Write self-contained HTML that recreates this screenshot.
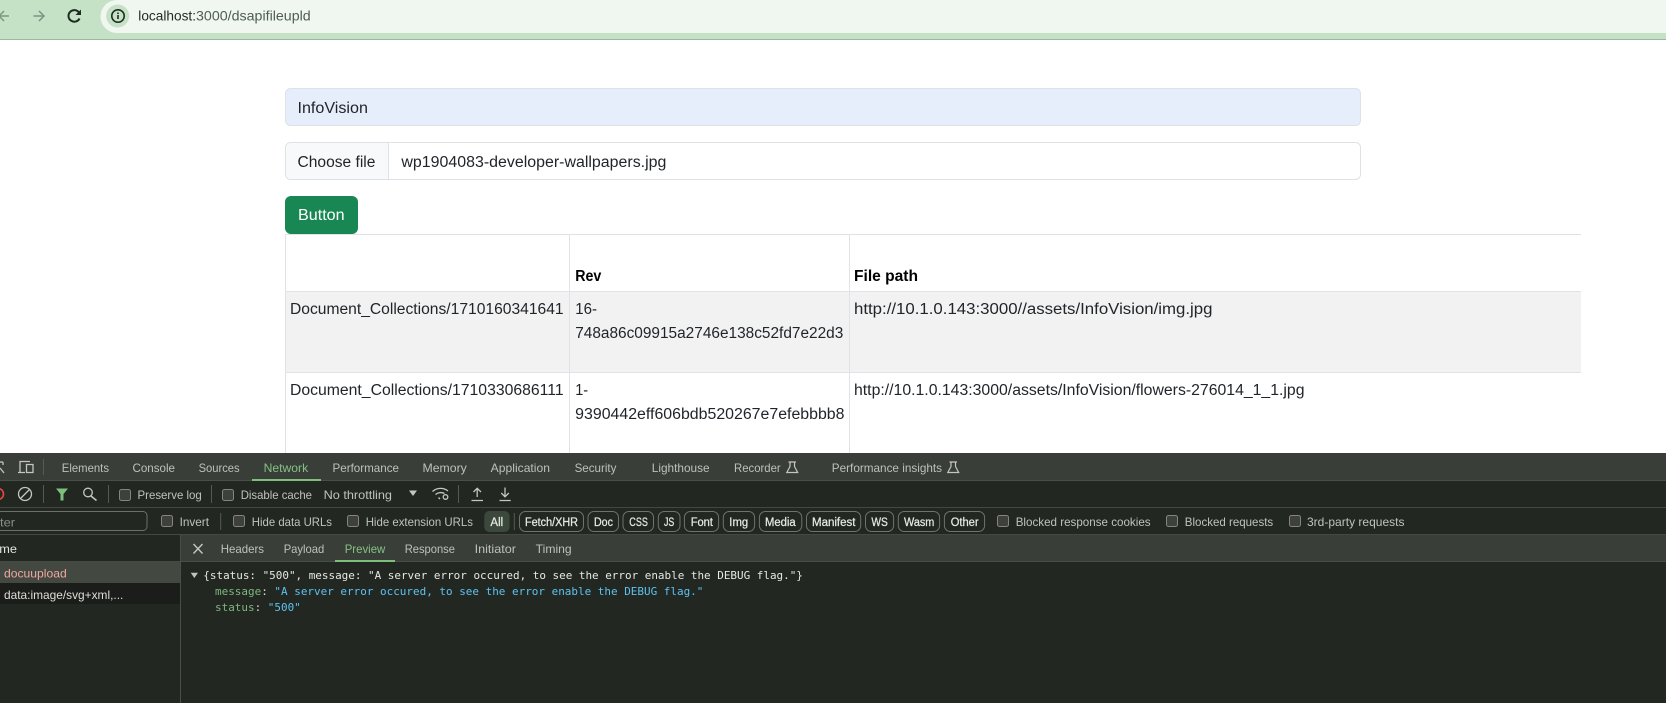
<!DOCTYPE html>
<html><head><meta charset="utf-8"><style>
html,body{margin:0;padding:0;width:1666px;height:703px;overflow:hidden;background:#fff}
svg{display:block}
text{font-family:"Liberation Sans",sans-serif;white-space:pre}
.p{font-size:15.5px;fill:#212529}
.d{font-size:12px;fill:#bfc3bb}
.t{font-size:12px;fill:#bdc1b9}
.c{font-size:11.5px;fill:#e6e9e2;stroke:#e6e9e2;stroke-width:.25}
.m{font-family:"DejaVu Sans Mono",monospace;font-size:10.8px}
.ck{fill:#3e403e;stroke:#82867f;stroke-width:1}
.chip{fill:none;stroke:#6f736c;stroke-width:1}
.i{fill:none;stroke:#c3c7bf;stroke-width:1.3}
.div{stroke:#565a54;stroke-width:1}
</style></head><body>
<svg width="1666" height="703" viewBox="0 0 1666 703" xmlns="http://www.w3.org/2000/svg">
<!-- browser bar -->
<rect width="1666" height="39" fill="#c5e1c6"/>
<rect y="39" width="1666" height="1" fill="#9db7a0"/>
<path d="M117 0H1666V33H117A16.500 16.500 0 0 1 117 0Z" fill="#f0f7f0"/>
<circle cx="117.700" cy="16" r="11.500" fill="#c5e1c6"/>
<circle cx="118" cy="16" r="6.200" fill="none" stroke="#1f2a22" stroke-width="1.600"/>
<path d="M118 15v4M118 12.500v1.500" stroke="#1f2a22" stroke-width="1.600" fill="none"/>
<path d="M9 16H0M4 11l-5 5 5 5" fill="none" stroke="#7f9482" stroke-width="1.500"/>
<path d="M33.500 16H44M39 11l5 5-5 5" fill="none" stroke="#7f9482" stroke-width="1.500"/>
<path d="M79.500 18.500A5.800 5.800 0 1 1 79 12.500" fill="none" stroke="#1f2a22" stroke-width="2"/>
<path d="M81 9.500V15H75.500Z" fill="#1f2a22"/>
<text x="138.300" y="20.500" font-size="14" fill="#1f2a22" textLength="57.700" lengthAdjust="spacingAndGlyphs">localhost:</text>
<text x="196" y="20.500" font-size="14" fill="#4f5c55" textLength="114.700" lengthAdjust="spacingAndGlyphs">3000/dsapifileupld</text>

<!-- page -->
<rect x="285.500" y="88.500" width="1075" height="37" rx="5" fill="#e7eefb" stroke="#dee2e6"/>
<text class="p" x="297.500" y="113" textLength="70.400" lengthAdjust="spacingAndGlyphs">InfoVision</text>
<rect x="285.500" y="142.500" width="1075" height="37" rx="5" fill="#fff" stroke="#dee2e6"/>
<path d="M388.500 143H290.500A5 5 0 0 0 286 148V174.500A5 5 0 0 0 290.500 179H388.500Z" fill="#f8f9fa"/>
<path d="M388.500 142.500V179.500" stroke="#dee2e6"/>
<text class="p" x="297.500" y="167" textLength="77.900" lengthAdjust="spacingAndGlyphs">Choose file</text>
<text class="p" x="401.400" y="167" textLength="265" lengthAdjust="spacingAndGlyphs">wp1904083-developer-wallpapers.jpg</text>
<rect x="285" y="196" width="73" height="38" rx="6" fill="#198754"/>
<text x="298" y="220" font-size="15.500" fill="#fff" textLength="46.600" lengthAdjust="spacingAndGlyphs">Button</text>

<rect x="285" y="291" width="1296" height="81" fill="#f2f2f2"/>
<path d="M285 234.500H1581M285 291.500H1581M285 372.500H1581M285.500 234V453M569.500 234V453M849.500 234V453" stroke="#dfe2e7" fill="none"/>
<text x="575.200" y="281" font-size="15.500" font-weight="bold" fill="#000" textLength="26.100" lengthAdjust="spacingAndGlyphs">Rev</text>
<text x="854" y="281" font-size="15.500" font-weight="bold" fill="#000" textLength="64" lengthAdjust="spacingAndGlyphs">File path</text>
<text class="p" x="290" y="314" textLength="273.600" lengthAdjust="spacingAndGlyphs">Document_Collections/1710160341641</text>
<text class="p" x="575.200" y="314" textLength="21.800" lengthAdjust="spacingAndGlyphs">16-</text>
<text class="p" x="575.200" y="338" textLength="268.100" lengthAdjust="spacingAndGlyphs">748a86c09915a2746e138c52fd7e22d3</text>
<text class="p" x="854" y="314" textLength="358.500" lengthAdjust="spacingAndGlyphs">http://10.1.0.143:3000//assets/InfoVision/img.jpg</text>
<text class="p" x="290" y="395" textLength="273.600" lengthAdjust="spacingAndGlyphs">Document_Collections/1710330686111</text>
<text class="p" x="575.200" y="395" textLength="12.900" lengthAdjust="spacingAndGlyphs">1-</text>
<text class="p" x="575.200" y="419" textLength="269.300" lengthAdjust="spacingAndGlyphs">9390442eff606bdb520267e7efebbbb8</text>
<text class="p" x="854" y="395" textLength="450.500" lengthAdjust="spacingAndGlyphs">http://10.1.0.143:3000/assets/InfoVision/flowers-276014_1_1.jpg</text>

<!-- devtools -->
<rect y="453" width="1666" height="250" fill="#232722"/>
<rect y="453" width="1666" height="27" fill="#3a3e38"/>
<rect y="480" width="1666" height="1" fill="#4a4e48"/>
<rect y="507" width="1666" height="1" fill="#444842"/>
<rect y="534" width="1666" height="1" fill="#444842"/>
<rect x="181" y="535" width="1485" height="26" fill="#3a3e38"/>
<rect x="181" y="561" width="1485" height="1" fill="#4a4e48"/>
<rect x="0" y="561" width="180" height="22" fill="#434841"/>
<rect x="0" y="583" width="180" height="21" fill="#1a1d19"/>
<rect x="180" y="534" width="1" height="169" fill="#4a4e48"/>

<!-- top tabs -->
<path class="i" d="M-4 462H3M3 462V465M0 468l4 5" />
<path class="i" d="M30 461.500H20V472M18 472.500H25M26.500 464.500H33V472.500H26.500Z"/>
<path class="div" d="M43.500 459V475"/>
<g class="d">
<text class="t" x="61.800" y="472" textLength="47.200" lengthAdjust="spacingAndGlyphs">Elements</text>
<text class="t" x="132.500" y="472" textLength="42.500" lengthAdjust="spacingAndGlyphs">Console</text>
<text class="t" x="198.600" y="472" textLength="41" lengthAdjust="spacingAndGlyphs">Sources</text>
<text class="t" x="263.600" y="472" textLength="44.600" lengthAdjust="spacingAndGlyphs" style="fill:#83c283">Network</text>
<text class="t" x="332.500" y="472" textLength="66.500" lengthAdjust="spacingAndGlyphs">Performance</text>
<text class="t" x="422.500" y="472" textLength="44.300" lengthAdjust="spacingAndGlyphs">Memory</text>
<text class="t" x="490.700" y="472" textLength="59.300" lengthAdjust="spacingAndGlyphs">Application</text>
<text class="t" x="574.600" y="472" textLength="41.800" lengthAdjust="spacingAndGlyphs">Security</text>
<text class="t" x="651.800" y="472" textLength="57.800" lengthAdjust="spacingAndGlyphs">Lighthouse</text>
<text class="t" x="734" y="472" textLength="46.700" lengthAdjust="spacingAndGlyphs">Recorder</text>
<text class="t" x="831.800" y="472" textLength="110.200" lengthAdjust="spacingAndGlyphs">Performance insights</text>
</g>
<rect x="252" y="479" width="69" height="2" fill="#7ebf7c"/>
<path class="i" d="M788.500 462H796M790 462V466.500L786.800 472.500H797.700L794.500 466.500V462" style="stroke-width:1.200"/>
<path class="i" d="M949.500 462H957M951 462V466.500L947.800 472.500H958.700L955.500 466.500V462" style="stroke-width:1.200"/>

<!-- toolbar -->
<circle cx="-2" cy="494" r="5.500" fill="none" stroke="#e5483c" stroke-width="1.600"/>
<circle cx="25" cy="494" r="6.500" class="i"/>
<path class="i" d="M20.500 498.500L29.500 489.500"/>
<path class="div" d="M43.500 485V503M108.500 485V503M211.500 485V503M458.500 485V503"/>
<path d="M56 488.500H68L63.500 494V500.500H60.500V494Z" fill="#7ebf7c"/>
<circle cx="88" cy="492.500" r="4.300" class="i"/>
<path class="i" d="M91 496L96.500 500.500" style="stroke-width:1.600"/>
<rect class="ck" x="119.500" y="489.500" width="11" height="11" rx="2"/>
<text class="d" x="137.500" y="499" textLength="64.300" lengthAdjust="spacingAndGlyphs">Preserve log</text>
<rect class="ck" x="222.500" y="489.500" width="11" height="11" rx="2"/>
<text class="d" x="240.700" y="499" textLength="71.300" lengthAdjust="spacingAndGlyphs">Disable cache</text>
<text class="d" x="323.600" y="499" textLength="68.400" lengthAdjust="spacingAndGlyphs">No throttling</text>
<path d="M409 490.500H417L413 496Z" fill="#c3c7bf"/>
<path class="i" d="M432.500 491.500A12 12 0 0 1 448 491M435.500 494.500A8 8 0 0 1 444.500 493.500M438.500 497.500L440 499"/>
<circle cx="445.500" cy="497" r="2.300" fill="none" stroke="#c3c7bf" stroke-width="1.300"/>
<path class="i" d="M477.200 497V488.500M473.500 492L477.200 488.300L481 492M471.500 500.500H483"/>
<path class="i" d="M505 487.500V496.500M501.300 493L505 496.800L508.800 493M499.500 500.500H510.700"/>

<!-- filter row -->
<rect x="-8" y="511.500" width="155" height="19" rx="4" fill="#232722" stroke="#6c706a"/>
<text class="d" x="0" y="526.500" textLength="15" lengthAdjust="spacingAndGlyphs" style="fill:#8b8f88">ter</text>
<rect class="ck" x="161.500" y="515.500" width="11" height="11" rx="2"/>
<text class="d" x="179.600" y="526" textLength="29.400" lengthAdjust="spacingAndGlyphs">Invert</text>
<path class="div" d="M220.700 513V530M514.300 513V530"/>
<rect class="ck" x="233.500" y="515.500" width="11" height="11" rx="2"/>
<text class="d" x="251.800" y="526" textLength="80.200" lengthAdjust="spacingAndGlyphs">Hide data URLs</text>
<rect class="ck" x="347.500" y="515.500" width="11" height="11" rx="2"/>
<text class="d" x="365.700" y="526" textLength="107.300" lengthAdjust="spacingAndGlyphs">Hide extension URLs</text>
<rect x="484.300" y="511" width="25.300" height="21" rx="5" fill="#3c483b"/>
<text class="c" x="490.400" y="526" textLength="12.800" lengthAdjust="spacingAndGlyphs">All</text>
<rect class="chip" x="519.500" y="511.500" width="64" height="20" rx="6"/>
<text class="c" x="525" y="526" textLength="53" lengthAdjust="spacingAndGlyphs">Fetch/XHR</text>
<rect class="chip" x="588" y="511.500" width="30.500" height="20" rx="6"/>
<text class="c" x="594" y="526" textLength="18.900" lengthAdjust="spacingAndGlyphs">Doc</text>
<rect class="chip" x="623" y="511.500" width="30.500" height="20" rx="6"/>
<text class="c" x="629.300" y="526" textLength="18.600" lengthAdjust="spacingAndGlyphs">CSS</text>
<rect class="chip" x="658.300" y="511.500" width="21.700" height="20" rx="6"/>
<text class="c" x="664" y="526" textLength="10.300" lengthAdjust="spacingAndGlyphs">JS</text>
<rect class="chip" x="684.400" y="511.500" width="34.200" height="20" rx="6"/>
<text class="c" x="690.700" y="526" textLength="22.200" lengthAdjust="spacingAndGlyphs">Font</text>
<rect class="chip" x="723.300" y="511.500" width="31.300" height="20" rx="6"/>
<text class="c" x="729.300" y="526" textLength="18.900" lengthAdjust="spacingAndGlyphs">Img</text>
<rect class="chip" x="759.400" y="511.500" width="42.400" height="20" rx="6"/>
<text class="c" x="765" y="526" textLength="30.700" lengthAdjust="spacingAndGlyphs">Media</text>
<rect class="chip" x="806.500" y="511.500" width="54.200" height="20" rx="6"/>
<text class="c" x="812" y="526" textLength="43.400" lengthAdjust="spacingAndGlyphs">Manifest</text>
<rect class="chip" x="865.500" y="511.500" width="28.100" height="20" rx="6"/>
<text class="c" x="871.400" y="526" textLength="16.500" lengthAdjust="spacingAndGlyphs">WS</text>
<rect class="chip" x="898.300" y="511.500" width="41.300" height="20" rx="6"/>
<text class="c" x="904" y="526" textLength="30.300" lengthAdjust="spacingAndGlyphs">Wasm</text>
<rect class="chip" x="944.400" y="511.500" width="40.200" height="20" rx="6"/>
<text class="c" x="950.700" y="526" textLength="27.900" lengthAdjust="spacingAndGlyphs">Other</text>
<rect class="ck" x="997.500" y="515.500" width="11" height="11" rx="2"/>
<text class="d" x="1015.700" y="526" textLength="134.900" lengthAdjust="spacingAndGlyphs">Blocked response cookies</text>
<rect class="ck" x="1166.500" y="515.500" width="11" height="11" rx="2"/>
<text class="d" x="1184.800" y="526" textLength="88.400" lengthAdjust="spacingAndGlyphs">Blocked requests</text>
<rect class="ck" x="1289.500" y="515.500" width="11" height="11" rx="2"/>
<text class="d" x="1307" y="526" textLength="97.500" lengthAdjust="spacingAndGlyphs">3rd-party requests</text>

<!-- sidebar -->
<text x="-17" y="553" font-size="12" fill="#e3e5df" textLength="34" lengthAdjust="spacingAndGlyphs">Name</text>
<text x="4" y="577.500" font-size="12" fill="#eda9a2" textLength="62.700" lengthAdjust="spacingAndGlyphs">docuupload</text>
<text x="4" y="599" font-size="12" fill="#dddfd9" textLength="119.300" lengthAdjust="spacingAndGlyphs">data:image/svg+xml,...</text>

<!-- panel tabs -->
<path d="M193.500 544L202.500 553.500M202.500 544L193.500 553.500" stroke="#c3c7bf" stroke-width="1.400" fill="none"/>
<text class="t" x="220.700" y="553" textLength="43.300" lengthAdjust="spacingAndGlyphs">Headers</text>
<text class="t" x="283.700" y="553" textLength="40.600" lengthAdjust="spacingAndGlyphs">Payload</text>
<text class="t" x="344.700" y="553" textLength="40.600" lengthAdjust="spacingAndGlyphs" style="fill:#83c283">Preview</text>
<rect x="335" y="560" width="60" height="2" fill="#7ebf7c"/>
<text class="t" x="404.700" y="553" textLength="50.300" lengthAdjust="spacingAndGlyphs">Response</text>
<text class="t" x="474.600" y="553" textLength="41.400" lengthAdjust="spacingAndGlyphs">Initiator</text>
<text class="t" x="535.700" y="553" textLength="36" lengthAdjust="spacingAndGlyphs">Timing</text>

<!-- preview -->
<path d="M190.700 572.700H198L194.300 578Z" fill="#bfc3bb"/>
<text class="m" x="203.300" y="579" fill="#e6e8e2" textLength="599.600" lengthAdjust="spacingAndGlyphs">{status: "500", message: "A server error occured, to see the error enable the DEBUG flag."}</text>
<text class="m" x="215" y="595" fill="#7cb87c" textLength="488.400" lengthAdjust="spacingAndGlyphs">message<tspan fill="#d5d8d1">: </tspan><tspan fill="#5cc3f2">"A server error occured, to see the error enable the DEBUG flag."</tspan></text>
<text class="m" x="215" y="611" fill="#7cb87c" textLength="85.800" lengthAdjust="spacingAndGlyphs">status<tspan fill="#d5d8d1">: </tspan><tspan fill="#5cc3f2">"500"</tspan></text>
</svg>
</body></html>
